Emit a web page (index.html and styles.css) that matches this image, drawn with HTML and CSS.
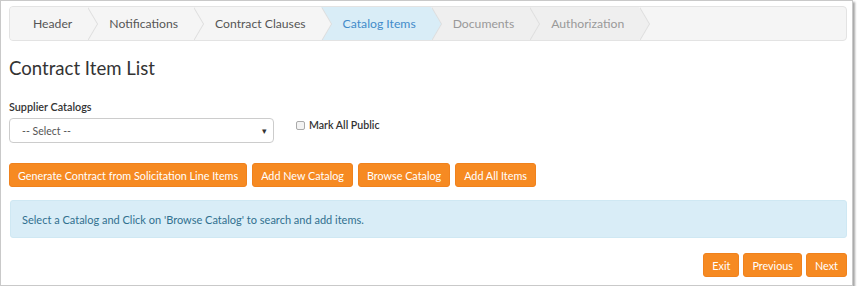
FILE: index.html
```html
<!DOCTYPE html>
<html lang="en">
<head>
    <meta charset="UTF-8">
    <title>Contract Item List</title>
    <link rel="stylesheet" href="styles.css">
</head>
<body>
    <div class="frame">
        <!-- wizard steps -->
        <ul class="steps">
            <li class="done first">Header</li>
            <li class="done">Notifications</li>
            <li class="done">Contract Clauses</li>
            <li class="active">Catalog Items</li>
            <li class="todo">Documents</li>
            <li class="todo">Authorization</li>
        </ul>

        <h1>Contract Item List</h1>

        <label class="field-label">Supplier Catalogs</label>
        <div class="select-row">
            <div class="select">
                <span>-- Select --</span>
                <span class="caret">&#9662;</span>
            </div>
            <label class="check"><span class="box"></span>Mark All Public</label>
        </div>

        <div class="actions">
            <button class="btn">Generate Contract from Solicitation Line Items</button>
            <button class="btn">Add New Catalog</button>
            <button class="btn">Browse Catalog</button>
            <button class="btn">Add All Items</button>
        </div>

        <div class="alert">Select a Catalog and Click on 'Browse Catalog' to search and add items.</div>

        <div class="nav">
            <button class="btn">Exit</button>
            <button class="btn">Previous</button>
            <button class="btn">Next</button>
        </div>
    </div>
</body>
</html>
```

FILE: styles.css
```css
body {
    margin: 0;
    background: #fff;
    font-family: Lato, "Open Sans", Arial, sans-serif;
    color: #333;
}

.frame {
    box-sizing: border-box;
    width: 853px;
    height: 286px;
    padding: 5px 5px 0 8px;
    border: 1px solid #c9c9c9;
    box-shadow: 2px 2px 2px rgba(0, 0, 0, 0.35);
}

.steps {
    display: flex;
    height: 33px;
    margin: 0;
    padding: 0;
    list-style: none;
    border: 1px solid #e3e3e3;
    border-radius: 4px;
    background: #f5f5f5;
    overflow: hidden;
    font-size: 12.2px;
}

.steps li {
    position: relative;
    display: flex;
    align-items: center;
    padding: 0 15px 0 22px;
    color: #555;
    background: #f5f5f5;
}

.steps li.first {
    padding-left: 23px;
}

.steps li::before,
.steps li::after {
    content: "";
    position: absolute;
    top: 50%;
    left: 100%;
    margin-top: -17px;
    border-top: 17px solid transparent;
    border-bottom: 17px solid transparent;
    border-left: 10px solid #dddddd;
    z-index: 2;
}

.steps li::before {
    margin-left: 1px;
}

.steps li::after {
    border-left-color: #f5f5f5;
    z-index: 3;
}

.steps li.active {
    background: #d9edf7;
    color: #428bca;
}

.steps li.active::after {
    border-left-color: #d9edf7;
}

.steps li.todo {
    background: #efefef;
    color: #999;
}

.steps li.todo::after {
    border-left-color: #efefef;
}

h1 {
    margin: 15px 0 0;
    font-size: 18.6px;
    line-height: 24px;
    font-weight: 400;
    color: #333;
}

.field-label {
    display: block;
    margin-top: 19px;
    font-size: 10.8px;
    font-weight: 600;
    line-height: 16px;
}

.select-row {
    display: flex;
    align-items: flex-start;
    margin-top: 3px;
}

.select {
    box-sizing: border-box;
    width: 265px;
    height: 25px;
    display: flex;
    align-items: center;
    justify-content: space-between;
    padding: 0 6px 0 12px;
    border: 1px solid #ccc;
    border-radius: 4px;
    font-size: 10.5px;
    color: #555;
}

.caret {
    font-size: 9px;
    color: #333;
}

.check {
    display: flex;
    align-items: center;
    margin: 1px 0 0 22px;
    font-size: 10.6px;
    font-weight: 600;
}

.box {
    box-sizing: border-box;
    width: 9px;
    height: 9px;
    margin-right: 4px;
    border: 1px solid #aaa;
    border-radius: 2px;
    background: #f3f3f3;
}

.actions {
    display: flex;
    gap: 5px;
    margin-top: 20px;
}

.btn {
    height: 24px;
    padding: 0 8px;
    border: 1px solid #f0821d;
    border-radius: 3px;
    background: #f68a22;
    color: #fff;
    font-family: Lato, "Open Sans", Arial, sans-serif;
    font-size: 10.8px;
    cursor: pointer;
}

.alert {
    box-sizing: border-box;
    height: 38px;
    margin: 13px 0 0 1px;
    padding: 0 11px;
    display: flex;
    align-items: center;
    border: 1px solid #cfe8f3;
    border-radius: 3px;
    background: #d9edf7;
    color: #31708f;
    font-size: 11px;
}

.nav {
    display: flex;
    justify-content: flex-end;
    gap: 4px;
    margin-top: 15px;
}
```
